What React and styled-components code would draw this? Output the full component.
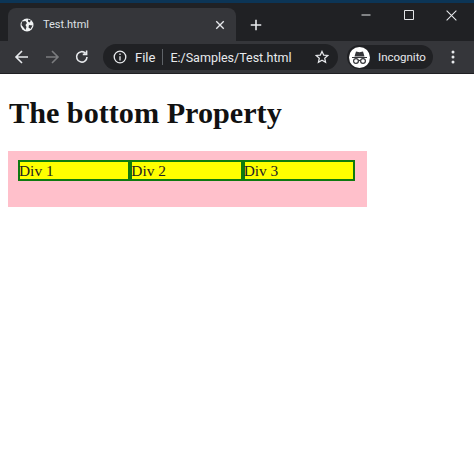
import React from 'react';
import styled, { createGlobalStyle } from 'styled-components';

const GlobalStyle = createGlobalStyle`
	html, body {
		margin: 0;
		background: #fff;
	}
`;

const Browser = styled.div`
	width: 474px;
	height: 457px;
	overflow: hidden;
	display: flex;
	flex-direction: column;
	background: #fff;
`;

const TitleBar = styled.div`
	height: 38px;
	border-top: 3px solid #0c3556;
	background: #202124;
	display: flex;
	align-items: flex-end;
	padding-left: 8px;
`;

const Tab = styled.div`
	width: 228px;
	height: 33px;
	box-sizing: border-box;
	background: #35363a;
	border-radius: 8px 8px 0 0;
	display: flex;
	align-items: center;
	padding: 0 10px 0 12px;
	color: #dee1e6;
	font: 11px Roboto, sans-serif;
`;

const TabTitle = styled.span`
	margin-left: 9px;
	flex: 1;
`;

const NewTab = styled.div`
	width: 40px;
	height: 33px;
	display: flex;
	align-items: center;
	justify-content: center;
`;

const WindowControls = styled.div`
	margin-left: auto;
	align-self: flex-start;
	display: flex;
	padding-right: 1px;
`;

const WindowButton = styled.div`
	width: 43px;
	height: 24px;
	display: flex;
	align-items: center;
	justify-content: center;
`;

const Toolbar = styled.div`
	height: 33px;
	box-sizing: border-box;
	background: #35363a;
	border-bottom: 1px solid #1f2023;
	display: flex;
	align-items: center;
	padding-left: 7px;
`;

const NavButton = styled.div`
	width: 30px;
	height: 24px;
	display: flex;
	align-items: center;
	justify-content: center;
`;

const Omnibox = styled.div`
	width: 235px;
	height: 26px;
	margin-left: 6px;
	border-radius: 13px;
	background: #202124;
	display: flex;
	align-items: center;
	padding: 0 9px 0 10px;
	box-sizing: border-box;
	color: #e8eaed;
	font: 13px Roboto, sans-serif;
`;

const OmniLabel = styled.span`
	margin-left: 8px;
`;

const OmniDivider = styled.span`
	width: 1px;
	height: 16px;
	margin: 0 7px 0 7px;
	background: #5f6368;
`;

const Address = styled.span`
	flex: 1;
	font-size: 12.5px;
`;

const Profile = styled.div`
	width: 86px;
	height: 24px;
	margin-left: 9px;
	border-radius: 12px;
	background: #202124;
	display: flex;
	align-items: center;
	padding-left: 2px;
	box-sizing: border-box;
	color: #e8eaed;
	font: 11.5px Roboto, sans-serif;
`;

const Avatar = styled.div`
	width: 21px;
	height: 21px;
	border-radius: 50%;
	background: #fff;
	display: flex;
	align-items: center;
	justify-content: center;
	margin-right: 8px;
`;

const MenuButton = styled.div`
	flex: 1;
	display: flex;
	justify-content: center;
	padding-right: 2px;
`;

const Page = styled.div`
	flex: 1;
	padding: 8px;
	font-family: "Liberation Serif", "Times New Roman", serif;
	color: #000;
`;

const Heading = styled.h1`
	margin: 14px 0 21px 1px;
	font-size: 30.2px;
	line-height: 34px;
	font-weight: bold;
	color: #111;
`;

const PinkBox = styled.div`
	width: 359px;
	height: 56px;
	box-sizing: border-box;
	padding: 9px 12px 0 10px;
	background: #ffc0cb;
	display: flex;
	align-items: flex-start;
`;

const YellowBox = styled.div`
	flex: 1;
	height: 21px;
	box-sizing: border-box;
	border: 2px solid #0f7a0f;
	background: #ff0;
	color: #222;
	font-size: 15.4px;
	line-height: 17px;
	text-indent: -1px;
	white-space: nowrap;
`;

const Globe = () => (
	<svg width="14" height="14" viewBox="0 0 14 14">
		<circle cx="7" cy="7" r="6.5" fill="#f1f3f4" />
		<path d="M2 3.5 L5.5 3 L7 5 L5.5 7 L6.5 9 L5.5 12 L3.5 9.5 L1.5 7 Z M8 1.5 L11 2.5 L9.5 4.5 L8 3.5 Z M9 7 L12.5 7.5 L10.5 11 L8.5 9.5 Z" fill="#35363a" />
	</svg>
);

const Line = ({ d, size = 16, color = '#e8eaed', width = 1.6 }) => (
	<svg width={size} height={size} viewBox="0 0 16 16" fill="none" stroke={color} strokeWidth={width}>
		<path d={d} />
	</svg>
);

const Info = () => (
	<svg width="14" height="14" viewBox="0 0 14 14" fill="none" stroke="#e8eaed" strokeWidth="1.3">
		<circle cx="7" cy="7" r="5.8" />
		<path d="M7 6.2 V10.4 M7 3.6 V5" />
	</svg>
);

const Star = () => (
	<svg width="14" height="14" viewBox="0 0 14 14" fill="none" stroke="#e8eaed" strokeWidth="1.2">
		<path d="M7 1.4 L8.7 5.1 L12.8 5.5 L9.7 8.2 L10.6 12.3 L7 10.2 L3.4 12.3 L4.3 8.2 L1.2 5.5 L5.3 5.1 Z" />
	</svg>
);

const IncognitoIcon = () => (
	<svg width="17" height="15" viewBox="0 0 17 15">
		<path d="M1 7 H16 V8 H1 Z M3.5 6.5 L5 1.5 L8.5 2.3 L12 1.5 L13.5 6.5 Z" fill="#35363a" />
		<circle cx="5" cy="11" r="2.4" fill="none" stroke="#35363a" strokeWidth="1.2" />
		<circle cx="12" cy="11" r="2.4" fill="none" stroke="#35363a" strokeWidth="1.2" />
		<path d="M7.4 10.5 H9.6" stroke="#35363a" strokeWidth="1.2" />
	</svg>
);

const Dots = () => (
	<svg width="4" height="14" viewBox="0 0 4 14" fill="#e8eaed">
		<circle cx="2" cy="2" r="1.5" />
		<circle cx="2" cy="7" r="1.5" />
		<circle cx="2" cy="12" r="1.5" />
	</svg>
);

function App() {
	return (
		<Browser>
			<GlobalStyle />
			<TitleBar>
				<Tab>
					<Globe />
					<TabTitle>Test.html</TabTitle>
					<Line size={12} width={1.8} d="M3 3 L13 13 M13 3 L3 13" />
				</Tab>
				<NewTab>
					<Line size={14} width={1.8} d="M8 2 V14 M2 8 H14" />
				</NewTab>
				<WindowControls>
					<WindowButton><Line size={12} width={1.3} d="M2 8 H14" /></WindowButton>
					<WindowButton><Line size={12} width={1.3} d="M2 2 H14 V14 H2 Z" /></WindowButton>
					<WindowButton><Line size={13} width={1.3} d="M2 2 L14 14 M14 2 L2 14" /></WindowButton>
				</WindowControls>
			</TitleBar>
			<Toolbar>
				<NavButton><Line d="M14 8 H2 M8 2 L2 8 L8 14" /></NavButton>
				<NavButton><Line color="#7b7c7f" d="M2 8 H14 M8 2 L14 8 L8 14" /></NavButton>
				<NavButton><Line d="M13 8 A5.2 5.2 0 1 1 11.5 4.2 M12.6 1.6 V5.4 H8.8" /></NavButton>
				<Omnibox>
					<Info />
					<OmniLabel>File</OmniLabel>
					<OmniDivider />
					<Address>E:/Samples/Test.html</Address>
					<Star />
				</Omnibox>
				<Profile>
					<Avatar><IncognitoIcon /></Avatar>
					Incognito
				</Profile>
				<MenuButton><Dots /></MenuButton>
			</Toolbar>
			<Page>
				<Heading>The bottom Property</Heading>
				<PinkBox>
					<YellowBox>Div 1</YellowBox>
					<YellowBox>Div 2</YellowBox>
					<YellowBox>Div 3</YellowBox>
				</PinkBox>
			</Page>
		</Browser>
	);
}

export default App;
